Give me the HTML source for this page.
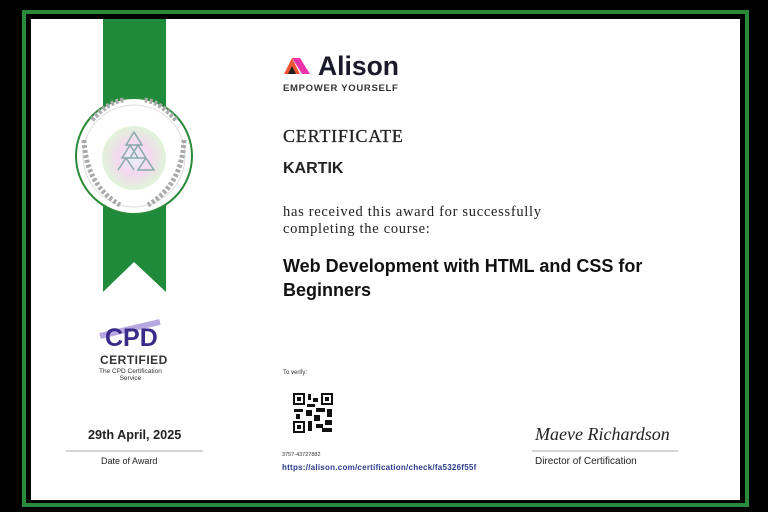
<!DOCTYPE html>
<html><head><style>
body{margin:0;width:768px;height:512px;background:#000;position:relative;overflow:hidden;font-family:"Liberation Sans",sans-serif;}
.frame{position:absolute;left:22px;top:10px;width:719px;height:489px;border:4px solid #2a8a3a;}
.paper{position:absolute;left:31px;top:19px;width:709px;height:481px;background:#fff;}
.a{position:absolute;white-space:nowrap;}
.serif{font-family:"Liberation Serif",serif;}
</style></head><body>
<div class="frame"></div>
<div class="paper"></div>
<svg class="a" style="left:0;top:0" width="768" height="512">
<polygon points="103,19 166,19 166,292 134,262 103,292" fill="#1f8a3a"/>
<circle cx="134" cy="156" r="58" fill="#fff" stroke="#2a8a3a" stroke-width="2"/>
<circle cx="134" cy="156" r="51" fill="none" stroke="#ddd" stroke-width="1"/>
<defs><radialGradient id="g"><stop offset="0" stop-color="#e8f0f8"/><stop offset=".5" stop-color="#f4d8f0"/><stop offset="1" stop-color="#e0f4d8"/></radialGradient></defs>
<circle cx="134" cy="158" r="32" fill="url(#g)"/>
<path d="M84 140 Q86 185 120 205 M184 140 Q182 185 148 205 M92 120 Q110 100 125 100 M176 120 Q158 100 143 100" stroke="#aaa" stroke-width="5" fill="none" stroke-dasharray="3 2"/>
<path d="M126 145 L134 132 L142 145 Z M122 158 L130 145 L138 158 Z M130 158 L138 145 L146 158Z M118 170 L126 158 L134 170 M138 170 L146 158 L154 170 Z" stroke="#8aa" stroke-width="1.5" fill="none"/>
<path d="M284 74 L292 58 L300 74 Z" fill="#e53"/><path d="M292 58 L300 58 L310 74 L302 74Z" fill="#e3a"/><path d="M284 74 L292 58 L288 66 Z" fill="#fb0"/><path d="M288 74 L292 66 L296 74Z" fill="#222"/>
<rect x="293" y="393" width="40" height="40" fill="#fff"/>
<g fill="#111"><rect x="293" y="393" width="12" height="12"/><rect x="321" y="393" width="12" height="12"/><rect x="293" y="421" width="12" height="12"/></g>
<g fill="#fff"><rect x="295" y="395" width="8" height="8"/><rect x="323" y="395" width="8" height="8"/><rect x="295" y="423" width="8" height="8"/></g>
<g fill="#111"><rect x="297" y="397" width="4" height="4"/><rect x="325" y="397" width="4" height="4"/><rect x="297" y="425" width="4" height="4"/>
<rect x="308" y="394" width="3" height="6"/><rect x="313" y="398" width="5" height="4"/><rect x="307" y="404" width="8" height="3"/><rect x="294" y="409" width="9" height="3"/><rect x="306" y="410" width="6" height="6"/><rect x="316" y="408" width="9" height="4"/><rect x="327" y="409" width="5" height="8"/><rect x="296" y="414" width="4" height="5"/><rect x="314" y="415" width="6" height="6"/><rect x="308" y="421" width="4" height="10"/><rect x="316" y="424" width="7" height="4"/><rect x="325" y="420" width="7" height="5"/><rect x="322" y="428" width="10" height="4"/></g>
<line x1="66" y1="451" x2="203" y2="451" stroke="#aaa"/>
<line x1="532" y1="451" x2="678" y2="451" stroke="#aaa"/>
<path d="M100 336 L160 322" stroke="#b8a8e0" stroke-width="6"/>
</svg>
<div class="a" style="left:318px;top:51px;font-size:26.5px;font-weight:bold;color:#1a1a2a">Alison</div>
<div class="a" style="left:283px;top:83px;font-size:9.5px;font-weight:bold;letter-spacing:.7px;color:#333">EMPOWER YOURSELF</div>
<div class="a serif" style="left:283px;top:126px;font-size:18px;letter-spacing:.8px;color:#222;-webkit-text-stroke:.3px #222">CERTIFICATE</div>
<div class="a" style="left:283px;top:160px;font-size:16px;font-weight:bold;color:#222">KARTIK</div>
<div class="a serif" style="left:283px;top:204px;font-size:14.5px;letter-spacing:.7px;line-height:17px;color:#222">has received this award for successfully<br>completing the course:</div>
<div class="a" style="left:283px;top:254px;font-size:18px;font-weight:bold;line-height:24px;color:#111">Web Development with HTML and CSS for<br>Beginners</div>
<div class="a" style="left:105px;top:324px;font-size:25px;font-weight:bold;color:#3a2a8a">CPD</div>
<div class="a" style="left:100px;top:353px;font-size:12px;font-weight:bold;color:#333;letter-spacing:.5px">CERTIFIED</div>
<div class="a" style="left:99px;top:368px;font-size:6.5px;line-height:7px;color:#333;text-align:center">The CPD Certification<br>Service</div>
<div class="a" style="left:88px;top:428px;font-size:12.7px;font-weight:bold;color:#222">29th April, 2025</div>
<div class="a" style="left:101px;top:456px;font-size:9px;color:#222">Date of Award</div>
<div class="a" style="left:283px;top:370px;font-size:6px;color:#333">To verify:</div>
<div class="a" style="left:282px;top:452px;font-size:5.5px;color:#333">3757-43727882</div>
<div class="a" style="left:282px;top:463px;font-size:8px;letter-spacing:.25px;font-weight:bold;color:#2a3a8a">https://alison.com/certification/check/fa5326f55f</div>
<div class="a serif" style="left:535px;top:424px;font-size:18px;font-style:italic;color:#222">Maeve Richardson</div>
<div class="a" style="left:535px;top:456px;font-size:10px;color:#222">Director of Certification</div>
</body></html>
